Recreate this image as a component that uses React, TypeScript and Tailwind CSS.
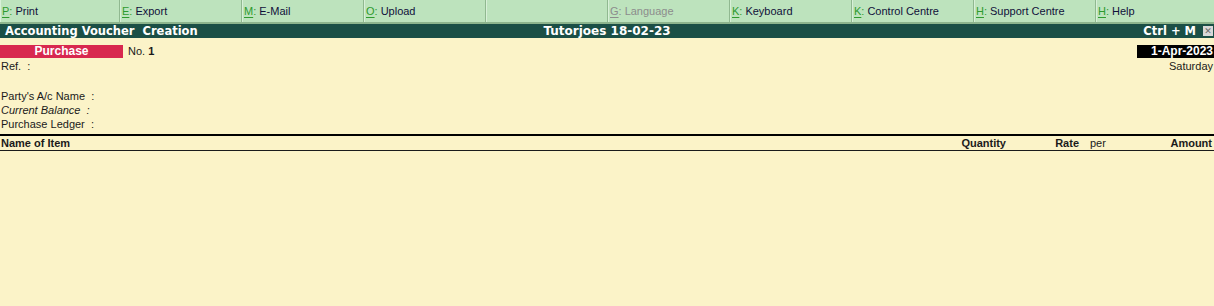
import React from "react";

const items: { k: string; label: string; disabled?: boolean }[] = [
  { k: "P", label: "Print" },
  { k: "E", label: "Export" },
  { k: "M", label: "E-Mail" },
  { k: "O", label: "Upload" },
  { k: "", label: "" },
  { k: "G", label: "Language", disabled: true },
  { k: "K", label: "Keyboard" },
  { k: "K", label: "Control Centre" },
  { k: "H", label: "Support Centre" },
  { k: "H", label: "Help" },
];

export default function App() {
  return (
    <div
      className="w-[1214px] h-[306px] bg-[#FBF3C8] flex flex-col overflow-hidden"
      style={{ fontFamily: '"Liberation Sans", Arial, sans-serif' }}
    >
      {/* toolbar */}
      <div className="h-[24px] flex bg-[#BDE3BD] border-b-2 border-[#8DB48D] shrink-0">
        {items.map((it, i) => (
          <div
            key={i}
            className={
              (i === 0 ? "w-[120px]" : "w-[122px]") +
              " shrink-0 flex items-center pl-[2px] pt-[1px] text-[11px] border-r border-[#90B890] shadow-[inset_1px_0_0_#D8F0D8]"
            }
          >
            {it.k && (
              <span className={it.disabled ? "text-[#8C8C8C]" : "text-[#2E9A2E]"}>
                <span className="underline underline-offset-2">{it.k}</span>:
              </span>
            )}
            {it.label && (
              <span className={"ml-[3px] " + (it.disabled ? "text-[#8C8C8C]" : "text-[#10103A]")}>
                {it.label}
              </span>
            )}
          </div>
        ))}
      </div>

      {/* title bar */}
      <div
        className="h-[14px] bg-[#1B4F46] text-white font-bold text-[11.5px] leading-[14px] flex items-center relative shrink-0"
        style={{ fontFamily: '"DejaVu Sans", Verdana, sans-serif' }}
      >
        <span className="pl-[5px] whitespace-pre">Accounting Voucher  Creation</span>
        <span className="absolute left-1/2 -translate-x-1/2 top-0 text-[12px]">Tutorjoes 18-02-23</span>
        <span className="ml-auto whitespace-pre">Ctrl + M</span>
        <span className="ml-[7px] mr-[1px] w-[10px] h-[10px] bg-[#D8D8D8] text-[#6A6A6A] text-[9px] leading-[10px] flex items-center justify-center">
          ✕
        </span>
      </div>

      {/* voucher header */}
      <div className="mt-[7px] flex items-center h-[13px] text-[11px] text-[#1A1A1A]">
        <div className="w-[123px] h-[13px] bg-[#D8284F] text-white font-bold text-center leading-[13px] text-[12px]">
          Purchase
        </div>
        <div className="ml-[5px]">
          No. <span className="font-bold">1</span>
        </div>
        <div className="ml-auto w-[77px] h-[13px] bg-black text-white font-bold text-right text-[12px] leading-[13px] pr-[1px]">
          1-Apr-2023
        </div>
      </div>
      <div className="flex h-[14px] mt-[1px] text-[11px] leading-[14px] text-[#1A1A1A]">
        <span className="pl-[1px]">Ref.&nbsp; :</span>
        <span className="ml-auto pr-[1px]">Saturday</span>
      </div>

      <div className="mt-[16px] flex flex-col text-[11px] leading-[14px] text-[#1A1A1A] pl-[1px]">
        <span>Party's A/c Name&nbsp; :</span>
        <span className="italic">Current Balance&nbsp; :</span>
        <span>Purchase Ledger&nbsp; :</span>
      </div>

      <div className="mt-[3px] border-t-2 border-black border-b border-b-[#1A1A1A] h-[17px] flex items-center text-[11px] font-bold text-[#1A1A1A]">
        <span className="pl-[1px]">Name of Item</span>
        <span className="ml-auto w-[80px] text-right">Quantity</span>
        <span className="w-[73px] text-right">Rate</span>
        <span className="w-[30px] pl-[11px] font-normal">per</span>
        <span className="w-[105px] text-right pr-[2px]">Amount</span>
      </div>
    </div>
  );
}
